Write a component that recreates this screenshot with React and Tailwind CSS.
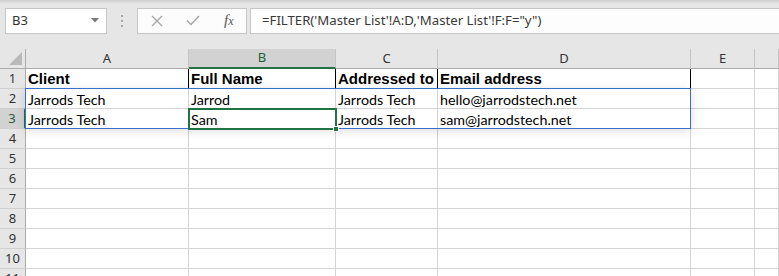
import React from "react";

const ui = { fontFamily: '"Noto Sans", "Open Sans", sans-serif' };
const cellFont = { fontFamily: 'Lato, "Liberation Sans", sans-serif' };
const boldFont = { fontFamily: '"Liberation Sans", Arial, sans-serif' };

const gridCols = "grid grid-cols-[26px_163px_147px_102px_253px_64px_1fr] auto-rows-[20px]";

const letters = ["A", "B", "C", "D", "E", ""];

const data = [
  ["Client", "Full Name", "Addressed to", "Email address", "", ""],
  ["Jarrods Tech", "Jarrod", "Jarrods Tech", "hello@jarrodstech.net", "", ""],
  ["Jarrods Tech", "Sam", "Jarrods Tech", "sam@jarrodstech.net", "", ""],
];

const rows = Array.from({ length: 11 }, (_, i) => data[i] || ["", "", "", "", "", ""]);

const FormulaBar = () => (
  <div className="bg-[#e6e6e6]">
    <div className="h-[4px] bg-gradient-to-b from-[#cdcdcd] to-[#e6e6e6]" />
    <div className="flex items-center h-[34px] pt-[9px] pb-[10px]" style={ui}>
      {/* name box */}
      <div className="ml-[5px] w-[102px] h-[26px] flex items-center justify-between bg-white border border-[#c6c6c6] pl-[6px] pr-[7px]">
        <span className="text-[13px] text-[#333]">B3</span>
        <svg width="8" height="5" viewBox="0 0 8 5">
          <path d="M0 0h8L4 4.5z" fill="#7a7a7a" />
        </svg>
      </div>
      {/* grip dots */}
      <div className="w-[30px] flex flex-col items-center gap-[3px]">
        <span className="w-[2px] h-[2px] bg-[#a8a8a8]" />
        <span className="w-[2px] h-[2px] bg-[#a8a8a8]" />
        <span className="w-[2px] h-[2px] bg-[#a8a8a8]" />
      </div>
      {/* cancel / enter / fx */}
      <div className="w-[110px] h-[26px] flex items-center bg-[#fcfcfc] border border-[#c6c6c6]">
        <svg className="ml-[13px]" width="12" height="12" viewBox="0 0 12 12">
          <path d="M1 1l10 10M11 1L1 11" stroke="#a6a6a6" strokeWidth="1.3" fill="none" />
        </svg>
        <svg className="ml-[23px]" width="14" height="11" viewBox="0 0 14 11">
          <path d="M1 5.5l4 4L13 1" stroke="#a6a6a6" strokeWidth="1.5" fill="none" />
        </svg>
        <span
          className="ml-[24px] text-[15px] italic text-[#555] leading-none"
          style={{ fontFamily: '"Liberation Serif", "DejaVu Serif", serif' }}
        >
          f<span className="text-[12px]">x</span>
        </span>
      </div>
      {/* formula input */}
      <div className="ml-[3px] flex-1 h-[26px] flex items-center bg-[#fdfdfd] border border-[#c6c6c6] border-r-0 pl-[11px]">
        <span className="text-[13.2px] text-[#3a3a3a] whitespace-nowrap">
          =FILTER('Master List'!A:D,'Master List'!F:F="y")
        </span>
      </div>
    </div>
    <div className="h-[11px]" />
  </div>
);

const Sheet = () => (
  <div className="relative">
    <div className={gridCols}>
      {/* corner */}
      <div className="bg-[#e6e6e6] border-r border-b border-[#ababab] flex items-end justify-end pr-[3px] pb-[3px]">
        <svg width="13" height="13" viewBox="0 0 13 13">
          <path d="M13 0V13H0z" fill="#b9b9b9" />
        </svg>
      </div>
      {letters.map((l, i) => (
        <div
          key={"h" + i}
          className={`flex items-center justify-center text-[13px] border-r border-[#c4c4c4] ${
            l === "B"
              ? "bg-[#d2d2d2] border-b-2 border-b-[#217346] text-[#1f5f3c]"
              : "bg-[#e6e6e6] border-b border-b-[#ababab] text-[#333]"
          }`}
          style={ui}
        >
          {l}
        </div>
      ))}

      {rows.map((r, ri) => (
        <React.Fragment key={ri}>
          <div
            className={`flex items-center justify-center text-[13px] border-b border-[#cfcfcf] ${
              ri === 2
                ? "bg-[#d2d2d2] border-r-2 border-r-[#217346] text-[#2b5a3d]"
                : "bg-[#e6e6e6] border-r border-r-[#ababab] text-[#333]"
            }`}
            style={ui}
          >
            {ri + 1}
          </div>
          {r.map((v, ci) => (
            <div
              key={ci}
              className={`flex items-center pl-[2px] pt-[2px] whitespace-nowrap bg-white border-b border-[#d4d4d4] ${
                ri === 0 && ci < 4 ? "border-r border-r-black" : "border-r border-r-[#d4d4d4]"
              } ${ri === 0 ? "font-bold text-[15px] text-black" : "text-[14.3px] text-black"}`}
              style={ri === 0 ? boldFont : cellFont}
            >
              {v}
            </div>
          ))}
        </React.Fragment>
      ))}
    </div>

    {/* selection layer drawn over the cells */}
    <div className={`absolute inset-0 pointer-events-none ${gridCols}`}>
      {/* spilled range A2:D3 */}
      <div className="col-start-2 col-end-6 row-start-3 row-end-5 -ml-px -mt-px border border-[#3a6fcf] shadow-[0_2px_10px_rgba(0,0,0,0.13)]" />
      {/* active cell B3 */}
      <div className="relative col-start-3 col-end-4 row-start-4 row-end-5 m-[-1px] border-2 border-[#217346]">
        <span className="absolute -right-[4px] -bottom-[4px] w-[6px] h-[6px] bg-[#217346] border border-white" />
      </div>
    </div>
  </div>
);

export default function App() {
  return (
    <div className="w-[779px] h-[276px] overflow-hidden bg-white">
      <FormulaBar />
      <Sheet />
    </div>
  );
}
